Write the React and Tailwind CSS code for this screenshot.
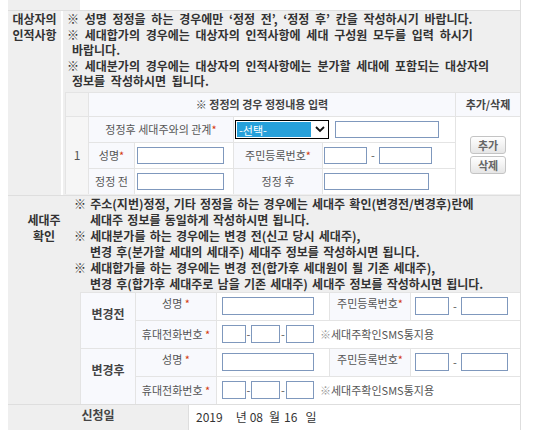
import React from 'react';

const font = "font-['Noto_Sans_CJK_KR','Noto_Sans',sans-serif]";

function Star() {
  return <span className="text-[#d4380d]">*</span>;
}

function Box({ className }) {
  return <input type="text" readOnly className={`block bg-white border border-[#7f98bd] p-0 outline-none ${className}`} />;
}

function SmallBtn({ children }) {
  return (
    <button className="w-[36px] h-[18px] rounded-[3px] border border-[#c4c4c4] bg-gradient-to-b from-white to-[#e6e6e6] text-[11px] font-bold text-[#666] leading-none">
      {children}
    </button>
  );
}

function SelectBox() {
  return (
    <div className="w-[94px] h-[19px] border border-black bg-white flex items-center p-px">
      <div className="h-full w-[74px] bg-[#26a0da] text-white text-[11px] leading-[17px] pl-[2px]">-선택-</div>
      <svg className="ml-[4px]" width="10" height="8" viewBox="0 0 10 8">
        <path d="M1 2 L5 6 L9 2" fill="none" stroke="#111" strokeWidth="1.8" />
      </svg>
    </div>
  );
}

export default function App() {
  const lab = 'bg-[#f8f9fd] flex items-center justify-center text-[11px] text-[#555]';
  const val = 'bg-white flex items-center';

  return (
    <div className={`w-[548px] h-[430px] bg-white overflow-hidden ${font}`}>
      <div className="ml-[8px] w-[513px] border-r border-[#dedede]">
        {/* top strip */}
        <div className="flex h-[11px] border-b border-[#dedede]">
          <div className="w-[72px] bg-[#efefef]" />
          <div className="flex-1 bg-white" />
        </div>

        {/* 대상자의 인적사항 */}
        <div className="flex bg-[#efefef] border-b border-[#dedede]">
          <div className="w-[55px] text-center text-[12px] font-bold text-[#333] leading-[15.5px] border-r-2 border-white">
            <div>대상자의</div>
            <div>인적사항</div>
          </div>
          <div className="flex-1 pb-[1px]">
            <div className="pl-[4px] text-[12px] font-bold text-[#333] leading-[15.5px] whitespace-nowrap [word-spacing:3px]">
              <div>※ 성명 정정을 하는 경우에만 ‘정정 전’, ‘정정 후’ 칸을 작성하시기 바랍니다.</div>
              <div>※ 세대합가의 경우에는 대상자의 인적사항에 세대 구성원 모두를 입력 하시기</div>
              <div className="pl-[5px]">바랍니다.</div>
              <div>※ 세대분가의 경우에는 대상자의 인적사항에는 분가할 세대에 포함되는 대상자의</div>
              <div className="pl-[5px]">정보를 작성하시면 됩니다.</div>
            </div>
            <div className="ml-[2px] mt-[3px] grid grid-cols-[22px_45px_98px_88px_1fr_64px] grid-rows-[23px_25px_25px_25px] gap-px bg-[#e4e4e4] border-t border-l border-[#e4e4e4]">
              <div className="bg-[#f3f3f3]" />
              <div className="col-span-4 bg-[#f8f9fd] flex items-center justify-center pr-[20px] text-[11px] font-bold text-[#444]">
                ※ 정정의 경우 정정내용 입력
              </div>
              <div className="bg-[#f8f9fd] flex items-center justify-center text-[11px] font-bold text-[#444]">추가/삭제</div>

              <div className="row-span-3 bg-[#f6f6f6] flex items-center justify-center text-[12px] text-[#555]">1</div>
              <div className={`col-span-2 ${lab}`}>정정후 세대주와의 관계<Star /></div>
              <div className={`col-span-2 ${val} pl-[1px] gap-[6px]`}>
                <SelectBox />
                <Box className="w-[104px] h-[17px]" />
              </div>
              <div className="row-span-3 bg-white flex flex-col items-center justify-center gap-[2px]">
                <SmallBtn>추가</SmallBtn>
                <SmallBtn>삭제</SmallBtn>
              </div>

              <div className={lab}>성명<Star /></div>
              <div className={`${val} pl-[2px]`}><Box className="w-[87px] h-[17px]" /></div>
              <div className={lab}>주민등록번호<Star /></div>
              <div className={`${val} pl-[1px]`}>
                <Box className="w-[43px] h-[17px]" />
                <span className="w-[12px] text-center text-[11px] text-[#555]">-</span>
                <Box className="w-[53px] h-[17px]" />
              </div>

              <div className={lab}>정정 전</div>
              <div className={`${val} pl-[2px]`}><Box className="w-[87px] h-[17px]" /></div>
              <div className={lab}>정정 후</div>
              <div className={`${val} pl-[1px]`}><Box className="w-[105px] h-[17px]" /></div>
            </div>
          </div>
        </div>

        {/* 세대주 확인 */}
        <div className="flex bg-[#efefef] border-b border-[#dedede]">
          <div className="w-[66px] pl-[6px] pt-[16px] text-center text-[12px] font-bold text-[#333] leading-[16px]">
            <div>세대주</div>
            <div>확인</div>
          </div>
          <div className="flex-1">
            <div className="text-[12px] font-bold text-[#333] leading-[16px] whitespace-nowrap [word-spacing:1.5px]">
              <div>※ 주소(지번)정정, 기타 정정을 하는 경우에는 세대주 확인(변경전/변경후)란에</div>
              <div className="pl-[16px]">세대주 정보를 동일하게 작성하시면 됩니다.</div>
              <div>※ 세대분가를 하는 경우에는 변경 전(신고 당시 세대주),</div>
              <div className="pl-[16px]">변경 후(분가할 세대의 세대주) 세대주 정보를 작성하시면 됩니다.</div>
              <div>※ 세대합가를 하는 경우에는 변경 전(합가후 세대원이 될 기존 세대주),</div>
              <div className="pl-[16px]">변경 후(합가후 세대주로 남을 기존 세대주) 세대주 정보를 작성하시면 됩니다.</div>
            </div>
            <div className="ml-[6px] grid grid-cols-[54px_80px_112px_80px_1fr] grid-rows-[27px_27px_27px_27px] gap-px bg-[#e4e4e4] border-t border-l border-[#e4e4e4]">
              {['변경전', '변경후'].map((t) => (
                <React.Fragment key={t}>
                  <div className="row-span-2 bg-[#f8f9fd] flex items-center justify-center pb-[12px] text-[12px] font-bold text-[#444]">{t}</div>
                  <div className={`${lab} pb-[6px]`}>성명&nbsp;<Star /></div>
                  <div className={`${val} pl-[5px]`}><Box className="w-[92px] h-[18px]" /></div>
                  <div className={`${lab} pb-[6px]`}>주민등록번호<Star /></div>
                  <div className={`${val} pl-[4px]`}>
                    <Box className="w-[34px] h-[18px]" />
                    <span className="w-[12px] text-center text-[11px] text-[#555]">-</span>
                    <Box className="w-[47px] h-[18px]" />
                  </div>
                  <div className={lab}>휴대전화번호&nbsp;<Star /></div>
                  <div className={`col-span-3 ${val} pl-[5px]`}>
                    <Box className="w-[24px] h-[18px]" />
                    <span className="w-[5px] text-center text-[11px] text-[#555] leading-none">-</span>
                    <Box className="w-[29px] h-[18px]" />
                    <span className="w-[6px] text-center text-[11px] text-[#555] leading-none">-</span>
                    <Box className="w-[28px] h-[18px]" />
                    <span className="ml-[6px] text-[11px] text-[#555]">
                      <span className="text-[#999]">※</span>세대주확인SMS통지용
                    </span>
                  </div>
                </React.Fragment>
              ))}
            </div>
          </div>
        </div>

        {/* 신청일 */}
        <div className="flex h-[26px] border-b border-[#dedede]">
          <div className="w-[180px] bg-[#efefef] flex items-center justify-center pb-[4px] text-[12px] font-bold text-[#444]">신청일</div>
          <div className="flex-1 bg-white flex items-center pl-[7px] text-[12px] text-[#333] border-l border-[#dedede]">
            <span>2019</span>
            <span className="ml-[13px]">년</span>
            <span className="ml-[3px]">08</span>
            <span className="ml-[6px]">월</span>
            <span className="ml-[4px]">16</span>
            <span className="ml-[8px]">일</span>
          </div>
        </div>
      </div>
    </div>
  );
}
